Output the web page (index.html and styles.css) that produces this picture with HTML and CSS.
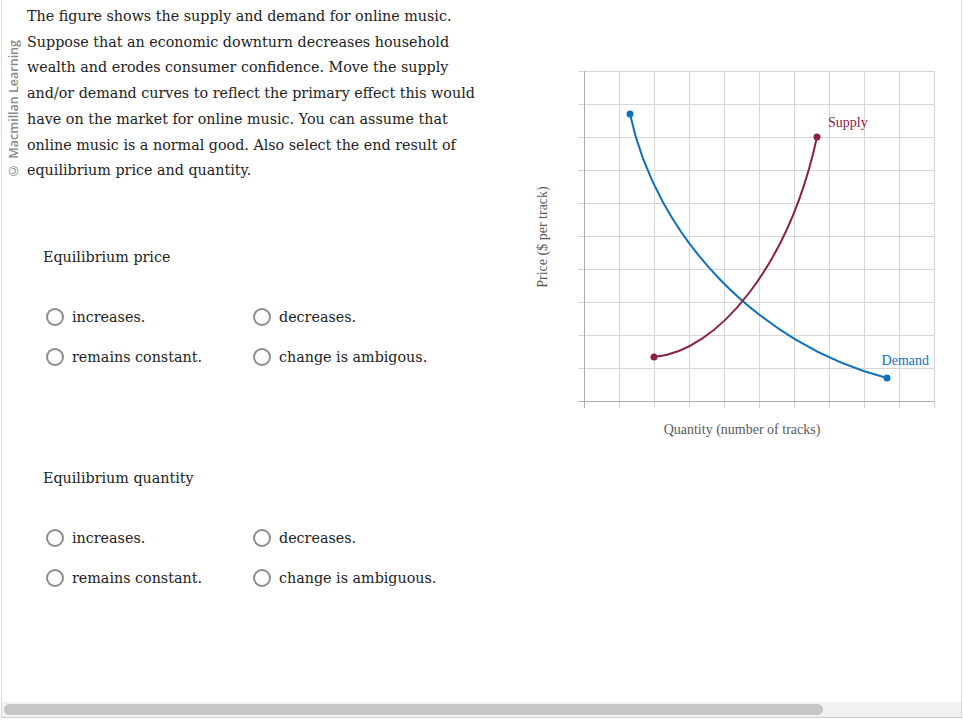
FILE: index.html
```html
<!DOCTYPE html>
<html>
<head>
<meta charset="utf-8">
<link rel="stylesheet" href="styles.css">
</head>
<body>
<div class="frame">
  <div class="page">
    <div class="wm-col"><span class="wm">© Macmillan Learning</span></div>
    <div class="question">
      <p class="prompt">The figure shows the supply and demand for online music.<br>Suppose that an economic downturn decreases household<br>wealth and erodes consumer confidence. Move the supply<br>and/or demand curves to reflect the primary effect this would<br>have on the market for online music. You can assume that<br>online music is a normal good. Also select the end result of<br>equilibrium price and quantity.</p>
      <div class="group">
        <div class="group-title">Equilibrium price</div>
        <div class="options">
          <label class="opt"><span class="radio"></span>increases.</label>
          <label class="opt"><span class="radio"></span>decreases.</label>
          <label class="opt"><span class="radio"></span>remains constant.</label>
          <label class="opt"><span class="radio"></span>change is ambigous.</label>
        </div>
      </div>
      <div class="group group2">
        <div class="group-title">Equilibrium quantity</div>
        <div class="options">
          <label class="opt"><span class="radio"></span>increases.</label>
          <label class="opt"><span class="radio"></span>decreases.</label>
          <label class="opt"><span class="radio"></span>remains constant.</label>
          <label class="opt"><span class="radio"></span>change is ambiguous.</label>
        </div>
      </div>
    </div>
    <div class="graph">
      <svg width="430" height="390" viewBox="520 60 430 390" class="chart">
        <g stroke="#d6d6d6" stroke-width="1">
          <line x1="618.5" y1="71" x2="618.5" y2="408"/>
          <line x1="653.5" y1="71" x2="653.5" y2="408"/>
          <line x1="688.5" y1="71" x2="688.5" y2="408"/>
          <line x1="723.5" y1="71" x2="723.5" y2="408"/>
          <line x1="758.5" y1="71" x2="758.5" y2="408"/>
          <line x1="793.5" y1="71" x2="793.5" y2="408"/>
          <line x1="828.5" y1="71" x2="828.5" y2="408"/>
          <line x1="863.5" y1="71" x2="863.5" y2="408"/>
          <line x1="898.5" y1="71" x2="898.5" y2="408"/>
          <line x1="933.5" y1="71" x2="933.5" y2="408"/>
          <line x1="577" y1="71.5" x2="934" y2="71.5"/>
          <line x1="577" y1="104.5" x2="934" y2="104.5"/>
          <line x1="577" y1="137.5" x2="934" y2="137.5"/>
          <line x1="577" y1="170.5" x2="934" y2="170.5"/>
          <line x1="577" y1="203.5" x2="934" y2="203.5"/>
          <line x1="577" y1="236.5" x2="934" y2="236.5"/>
          <line x1="577" y1="269.5" x2="934" y2="269.5"/>
          <line x1="577" y1="302.5" x2="934" y2="302.5"/>
          <line x1="577" y1="335.5" x2="934" y2="335.5"/>
          <line x1="577" y1="368.5" x2="934" y2="368.5"/>
        </g>
        <g stroke="#b0b0b0" stroke-width="1">
          <line x1="583.5" y1="71" x2="583.5" y2="408"/>
          <line x1="577" y1="401.5" x2="934" y2="401.5"/>
        </g>
        <path d="M629,114 C655,236 756,344 886,378" fill="none" stroke="#1170bb" stroke-width="2"/>
        <circle cx="629" cy="114" r="3.5" fill="#1170bb"/>
        <circle cx="886" cy="378" r="3.5" fill="#1170bb"/>
        <path d="M653,357 C716,352 788,266 816,137" fill="none" stroke="#8a2145" stroke-width="2"/>
        <circle cx="653" cy="357" r="3.5" fill="#8a2145"/>
        <circle cx="816" cy="137" r="3.5" fill="#8a2145"/>
        <text x="827" y="127" class="lbl supply">Supply</text>
        <text x="928" y="365" class="lbl demand" text-anchor="end">Demand</text>
        <text x="741" y="434" class="axis" text-anchor="middle">Quantity (number of tracks)</text>
        <text transform="translate(546 237) rotate(-90)" class="axis" text-anchor="middle">Price ($ per track)</text>
      </svg>
    </div>
  </div>
  <div class="scrollbar"><div class="thumb"></div></div>
</div>
</body>
</html>
```

FILE: styles.css
```css
html, body {
  margin: 0;
  padding: 0;
  background: #fff;
}
body {
  width: 963px;
  height: 720px;
  overflow: hidden;
}
.frame {
  width: 961px;
  height: 718px;
  margin-left: 1px;
  border-left: 1px solid #dcdcdc;
  border-right: 1px solid #dcdcdc;
  border-bottom: 1px solid #cfcfcf;
  box-sizing: border-box;
  display: flex;
  flex-direction: column;
}
.page {
  flex: 1;
  display: flex;
  min-height: 0;
}
.wm-col {
  width: 24px;
  flex: none;
  display: flex;
  justify-content: center;
}
.wm {
  writing-mode: vertical-rl;
  transform: rotate(180deg);
  margin-top: 34px;
  height: 145px;
  font-family: "Open Sans", sans-serif;
  font-size: 12.5px;
  font-weight: 600;
  color: #8a8a8a;
  white-space: nowrap;
  line-height: 14px;
}
.question {
  width: 480px;
  flex: none;
  font-family: "DejaVu Serif", serif;
  color: #222;
}
.prompt {
  margin: 4px 0 0 1px;
  font-size: 14.3px;
  line-height: 25.7px;
  white-space: nowrap;
}
.group {
  margin-top: 63px;
  padding-left: 17px;
}
.group2 {
  margin-top: 101px;
}
.group-title {
  font-size: 14.3px;
  line-height: 20px;
}
.options {
  margin-top: 40px;
  display: grid;
  grid-template-columns: 207px 200px;
  row-gap: 20px;
}
.opt {
  display: flex;
  align-items: center;
  font-size: 14.3px;
  line-height: 20px;
  gap: 8px;
}
.radio {
  width: 18px;
  height: 18px;
  border: 2px solid #8c8c8c;
  border-radius: 50%;
  box-sizing: border-box;
  flex: none;
  margin-left: 3px;
}
.graph {
  flex: none;
  padding-top: 60px;
  margin-left: 15px;
}
.chart {
  display: block;
}
.lbl {
  font-family: "Liberation Serif", serif;
  font-size: 14px;
}
.supply { fill: #8a2145; }
.demand { fill: #1170bb; }
.axis {
  font-family: "Liberation Serif", serif;
  font-size: 14px;
  fill: #5a5a5a;
}
.scrollbar {
  height: 15px;
  background: #f1f1f1;
  flex: none;
  padding: 2px 0 2px 2px;
  box-sizing: border-box;
}
.thumb {
  width: 819px;
  height: 11px;
  background: #c6c6c6;
  border-radius: 6px;
}
```
